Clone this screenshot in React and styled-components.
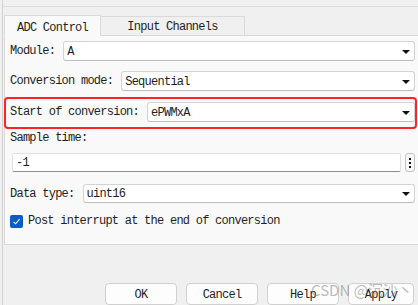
import React from 'react';
import styled, { createGlobalStyle } from 'styled-components';

const Global = createGlobalStyle`
  html, body { margin: 0; padding: 0; background: #f0f0f0; }
  * { box-sizing: border-box; }
`;

const Window = styled.div`
  position: relative;
  width: 416px;
  height: 305px;
  margin-left: 2px;
  border-left: 1px solid #d2d2d2;
  background: #f0f0f0;
  overflow: hidden;
  font-family: "Liberation Mono", "Noto Sans CJK SC", monospace;
  font-size: 12px;
  letter-spacing: -0.75px;
  color: #1e1e1e;
`;

const TopBar = styled.div`
  height: 7px;
  border-bottom: 1px solid #dcdcdc;
`;

const Body = styled.div`
  padding-left: 1px;
`;

const Tabs = styled.div`
  display: flex;
  align-items: flex-end;
  margin-top: 7px;
  height: 21px;
`;

const Tab = styled.div`
  display: flex;
  align-items: center;
  justify-content: center;
  width: ${p => p.$w}px;
  height: ${p => (p.$active ? 21 : 19)}px;
  background: ${p => (p.$active ? '#f9f9f9' : '#f0f0f0')};
  border: 1px solid #dadada;
  border-bottom: ${p => (p.$active ? '1px solid #f9f9f9' : 'none')};
  border-left: ${p => (p.$active ? '1px solid #dadada' : 'none')};
  margin-bottom: ${p => (p.$active ? -1 : 0)}px;
  position: relative;
  z-index: ${p => (p.$active ? 1 : 0)};
  padding-top: ${p => (p.$active ? 4 : 2)}px;
`;

const Panel = styled.div`
  width: 420px;
  height: 210px;
  background: #f9f9f9;
  border: 1px solid #dadada;
  padding: 5px 8px 0 5px;
  display: flex;
  flex-direction: column;
`;

const Row = styled.div`
  display: flex;
  align-items: center;
  gap: ${p => p.$gap ?? 8}px;
  margin-top: ${p => p.$mt ?? 0}px;
  padding-left: ${p => p.$pl ?? 0}px;
`;

const Highlight = styled.div`
  display: flex;
  align-items: center;
  gap: 8px;
  margin: 6px -2px 0 -6px;
  padding: 3px 0 5px 4px;
  border: 2px solid #ff2323;
  border-radius: 4px;
`;

const Label = styled.span`
  white-space: nowrap;
  line-height: 14px;
`;

const TextLine = styled.div`
  line-height: 14px;
  margin-top: ${p => p.$mt}px;
`;

const Select = styled.div`
  flex: 1;
  height: ${p => p.$h ?? 20}px;
  display: flex;
  align-items: center;
  justify-content: space-between;
  background: #ffffff;
  border: 1px solid #d3d3d3;
  border-bottom-color: #bdbdbd;
  border-radius: 3px;
  padding: 1px 4px 0 3px;
`;

const Arrow = styled.span`
  width: 0;
  height: 0;
  border-left: 4px solid transparent;
  border-right: 4px solid transparent;
  border-top: 4px solid #111;
`;

const Input = styled.div`
  flex: 1;
  height: 19px;
  display: flex;
  align-items: center;
  background: #ffffff;
  border: 1px solid #e0e0e0;
  border-bottom: 1px solid #8c8c8c;
  border-radius: 2px;
  padding: 1px 3px 0;
`;

const DotsButton = styled.div`
  width: 10px;
  height: 19px;
  display: flex;
  flex-direction: column;
  align-items: center;
  justify-content: center;
  gap: 2px;
  border: 1px solid #c3c3c3;
  border-radius: 3px;
  background: #f7f7f7;
  span {
    width: 2px;
    height: 2px;
    background: #111;
  }
`;

const Check = styled.span`
  width: 13px;
  height: 13px;
  border-radius: 2px;
  background: #0b5cc5;
  display: flex;
  align-items: center;
  justify-content: center;
`;

const Buttons = styled.div`
  display: flex;
  gap: 9px;
  margin-top: 38px;
  padding-left: 101px;
`;

const Button = styled.div`
  width: ${p => p.$w ?? 72}px;
  height: 22px;
  display: flex;
  align-items: center;
  justify-content: center;
  background: #fdfdfd;
  border: 1px solid #d0d0d0;
  border-radius: 4px;
  padding-top: 2px;
`;

const Watermark = styled.div`
  position: absolute;
  left: 308px;
  top: 279px;
  font-family: "Noto Sans CJK SC", "Noto Sans", sans-serif;
  font-size: 15px;
  letter-spacing: 0;
  color: rgba(120, 120, 120, 0.5);
  white-space: nowrap;
`;

const Field = ({ value, h }) => (
  <Select $h={h}>
    <span>{value}</span>
    <Arrow />
  </Select>
);

export default function App() {
  return (
    <>
      <Global />
      <Window>
        <TopBar />
        <Body>
          <Tabs>
            <Tab $active $w={97}>ADC Control</Tab>
            <Tab $w={144}>Input Channels</Tab>
          </Tabs>
          <Panel>
            <Row>
              <Label>Module:</Label>
              <Field value="A" />
            </Row>
            <Row $mt={10}>
              <Label>Conversion mode:</Label>
              <Field value="Sequential" />
            </Row>
            <Highlight>
              <Label>Start of conversion:</Label>
              <Field value="ePWMxA" />
            </Highlight>
            <TextLine $mt={2}>Sample time:</TextLine>
            <Row $mt={8} $pl={2} $gap={4}>
              <Input>-1</Input>
              <DotsButton>
                <span />
                <span />
                <span />
              </DotsButton>
            </Row>
            <Row $mt={12}>
              <Label>Data type:</Label>
              <Field value="uint16" h={19} />
            </Row>
            <Row $mt={11} $gap={5} $pl={-1}>
              <Check>
                <svg width="9" height="9" viewBox="0 0 9 9">
                  <path d="M1.5 4.8 L3.6 6.8 L7.6 2.2" fill="none" stroke="#fff" strokeWidth="1.1" />
                </svg>
              </Check>
              <Label>Post interrupt at the end of conversion</Label>
            </Row>
          </Panel>
          <Buttons>
            <Button>OK</Button>
            <Button>Cancel</Button>
            <Button>Help</Button>
            <Button $w={66}>Apply</Button>
          </Buttons>
        </Body>
        <Watermark>CSDN @沉沙丶</Watermark>
      </Window>
    </>
  );
}
